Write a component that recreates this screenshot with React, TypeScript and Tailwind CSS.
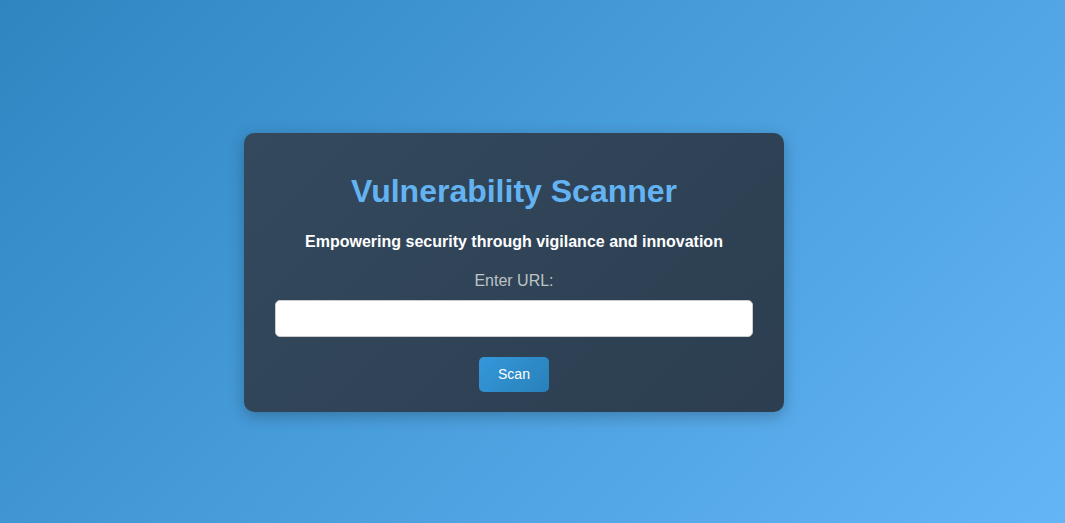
export default function App() {
  return (
    <div
      className="flex h-[523px] w-full items-center justify-center bg-[linear-gradient(135deg,#2e86c1,#64b5f6)] pt-[21px] pr-[37px]"
      style={{ fontFamily: '"Liberation Sans", Arial, sans-serif' }}
    >
      <div className="w-[540px] rounded-[10px] bg-[linear-gradient(135deg,#34495e,#2c3e50)] px-[31px] pt-[40px] pb-[20px] text-center shadow-[0_4px_15px_rgba(0,0,0,0.25)]">
        <h1 className="text-[32px] font-bold leading-[37px] text-[#63b3f2]">Vulnerability Scanner</h1>
        <p className="mt-[23px] text-[16px] font-bold leading-[18px] text-white">
          Empowering security through vigilance and innovation
        </p>
        <label className="mt-[21px] block text-[16px] leading-[18px] text-[#bdc3c7]">Enter URL:</label>
        <input
          type="text"
          className="mt-[10px] block h-[37px] w-full rounded-[5px] border border-[#ccc] bg-white px-2 text-[14px] text-black outline-none"
        />
        <button className="mx-auto mt-[20px] block h-[35px] w-[70px] rounded-[5px] bg-[linear-gradient(135deg,#3498db,#2980b9)] text-[14px] text-white">
          Scan
        </button>
      </div>
    </div>
  )
}
